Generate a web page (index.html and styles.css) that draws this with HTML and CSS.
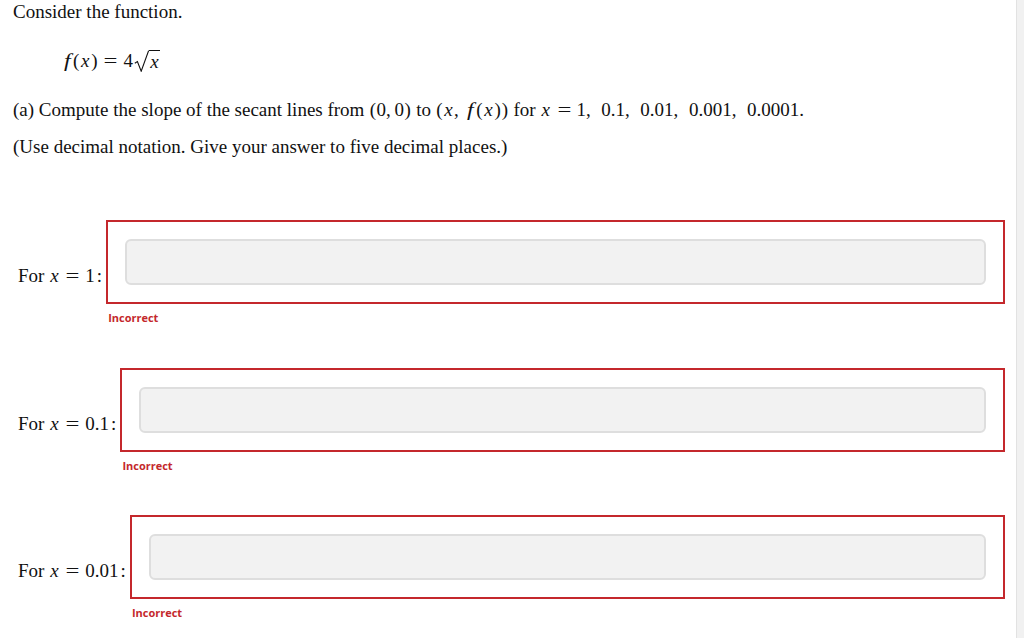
FILE: index.html
```html
<!DOCTYPE html>
<html>
<head>
<meta charset="utf-8">
<link rel="stylesheet" href="styles.css">
</head>
<body>
<div class="page">
  <main class="content">
    <p class="line intro">Consider the function.</p>
    <p class="line formula"><span class="math"><span class="mf">f</span><span class="mp">(</span><span class="mx">x</span><span class="mp">)</span><span class="meq"><span>=</span></span>4<span class="sqrt"><svg class="rad" viewBox="0 0 15 22" preserveAspectRatio="none"><path d="M0.8 13.2 L3.4 11.6 L7.2 21.2 L14.6 0.7" /></svg><span class="radicand"><span class="mx">x</span></span></span></span></p>
    <p class="line part">(a) Compute the slope of the secant lines from <span class="math"><span class="mp">(</span>0<span class="mc">,</span><span class="thin"></span>0<span class="mp">)</span></span> to <span class="math"><span class="mp">(</span><span class="mx">x</span><span class="mc">,</span><span class="gap-l"></span><span class="mf">f</span><span class="mp">(</span><span class="mx">x</span><span class="mp">)</span><span class="mp">)</span></span> for <span class="math"><span class="mx">x</span><span class="meq"><span>=</span></span>1<span class="mc">,</span><span class="gap"></span>0.1<span class="mc">,</span><span class="gap"></span>0.01<span class="mc">,</span><span class="gap"></span>0.001<span class="mc">,</span><span class="gap"></span>0.0001<span class="mc">.</span></span></p>
    <p class="line note">(Use decimal notation. Give your answer to five decimal places.)</p>

    <div class="rows">
      <div class="row">
        <div class="label">For <span class="math"><span class="mx">x</span><span class="meq"><span>=</span></span>1<span class="mcolon">:</span></span></div>
        <div class="answer">
          <div class="box"><div class="field"></div></div>
          <div class="status">Incorrect</div>
        </div>
      </div>
      <div class="row">
        <div class="label">For <span class="math"><span class="mx">x</span><span class="meq"><span>=</span></span>0.1<span class="mcolon">:</span></span></div>
        <div class="answer">
          <div class="box"><div class="field"></div></div>
          <div class="status">Incorrect</div>
        </div>
      </div>
      <div class="row">
        <div class="label">For <span class="math"><span class="mx">x</span><span class="meq"><span>=</span></span>0.01<span class="mcolon">:</span></span></div>
        <div class="answer">
          <div class="box"><div class="field"></div></div>
          <div class="status">Incorrect</div>
        </div>
      </div>
    </div>
  </main>
  <div class="strip"></div>
</div>
</body>
</html>
```

FILE: styles.css
```css
html, body {
  margin: 0;
  padding: 0;
  background: #ffffff;
}

body {
  font-family: "Liberation Serif", "Times New Roman", serif;
  font-size: 19px;
  color: #111111;
}

.page {
  display: flex;
  width: 1024px;
  height: 638px;
  overflow: hidden;
}

.content {
  flex: 1;
  padding: 0 11px 0 13px;
  min-width: 0;
}

.strip {
  width: 7px;
  height: 100%;
  background: #f1f1f1;
  border-left: 1px solid #e2e2e2;
}

.line {
  margin: 0;
  line-height: 22px;
  white-space: nowrap;
}

.intro { margin-top: 1px; }
.formula { margin-top: 27px; padding-left: 49px; }
.part { margin-top: 27px; }
.note { margin-top: 15px; }

/* math typesetting with TeX-like metrics */
.math {
  white-space: nowrap;
}

.mx, .mf {
  display: inline-block;
  font-style: italic;
  text-align: center;
}

.mx { width: 0.572em; }

.mf {
  width: 0.55em;
  transform: scaleX(1.25);
}

.mp {
  display: inline-block;
  width: 0.389em;
  text-align: center;
}

.mc {
  display: inline-block;
  width: 0.278em;
}

.meq {
  display: inline-block;
  width: 0.778em;
  margin: 0 0.278em;
  text-align: center;
}

.meq > span {
  display: inline-block;
  transform: scaleX(1.3);
}

.mcolon {
  display: inline-block;
  width: 0.278em;
  margin-left: 2px;
  text-align: center;
}

.thin { display: inline-block; width: 0.167em; }
.gap { display: inline-block; width: 10px; }
.gap-l { display: inline-block; width: 6px; }

.sqrt {
  display: inline-flex;
  align-items: flex-start;
  vertical-align: -5px;
  margin-left: 1px;
}

.rad {
  width: 15px;
  height: 22px;
  display: block;
}

.rad path {
  fill: none;
  stroke: #111111;
  stroke-width: 1.1;
  stroke-linejoin: miter;
}

.radicand {
  border-top: 1.2px solid #111111;
  line-height: 19px;
  padding-top: 1px;
}

.rows {
  margin-top: 62px;
  padding-left: 5px;
}

.row {
  display: flex;
  align-items: flex-start;
  margin-bottom: 42.5px;
}

.label {
  margin-top: 45px;
  line-height: 22px;
  white-space: nowrap;
  padding-right: 4px;
}

.answer {
  flex: 1;
  min-width: 0;
}

.box {
  border: 2px solid #c4282c;
  padding: 17px;
}

.field {
  height: 42px;
  background: #f2f2f2;
  border: 2px solid #dedede;
  border-radius: 6px;
}

.status {
  margin-top: 6px;
  padding-left: 2px;
  font-family: "Open Sans", "Liberation Sans", sans-serif;
  font-weight: 700;
  font-size: 11px;
  line-height: 15px;
  color: #c4282c;
}
```
